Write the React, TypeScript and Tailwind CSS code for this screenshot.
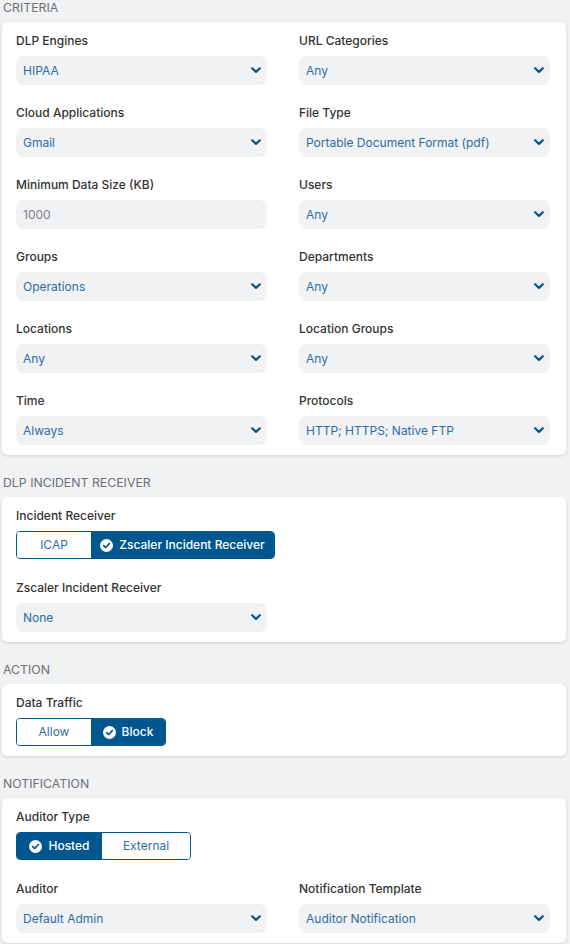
import { useState } from 'react'

type Field = { label: string; value: string; kind?: 'select' | 'input' }

const criteria: Field[] = [
  { label: 'DLP Engines', value: 'HIPAA' },
  { label: 'URL Categories', value: 'Any' },
  { label: 'Cloud Applications', value: 'Gmail' },
  { label: 'File Type', value: 'Portable Document Format (pdf)' },
  { label: 'Minimum Data Size (KB)', value: '1000', kind: 'input' },
  { label: 'Users', value: 'Any' },
  { label: 'Groups', value: 'Operations' },
  { label: 'Departments', value: 'Any' },
  { label: 'Locations', value: 'Any' },
  { label: 'Location Groups', value: 'Any' },
  { label: 'Time', value: 'Always' },
  { label: 'Protocols', value: 'HTTP; HTTPS; Native FTP' },
]

function Chevron() {
  return (
    <svg width="10" height="7" viewBox="0 0 10 7" className="shrink-0">
      <path
        d="M1.2 1.2 5 5 8.8 1.2"
        fill="none"
        stroke="#00578f"
        strokeWidth="2.2"
        strokeLinecap="round"
        strokeLinejoin="round"
      />
    </svg>
  )
}

function CheckCircle() {
  return (
    <svg width="13" height="13" viewBox="0 0 14 14" className="shrink-0">
      <circle cx="7" cy="7" r="7" fill="#ffffff" />
      <path
        d="M4 7.2 6.1 9.2 10 5"
        fill="none"
        stroke="#00578f"
        strokeWidth="1.8"
        strokeLinecap="round"
        strokeLinejoin="round"
      />
    </svg>
  )
}

function Label({ children }: { children: string }) {
  return (
    <div className="h-4 text-[12px] font-medium leading-4 text-[#333333]">
      {children}
    </div>
  )
}

function SelectField({ label, value, kind = 'select' }: Field) {
  return (
    <div className="flex flex-col gap-[7px]">
      <Label>{label}</Label>
      <div className="flex h-[29px] items-center justify-between rounded-lg bg-[#f1f2f4] pl-[7px] pr-[6px]">
        <span
          className={
            kind === 'input'
              ? 'text-[12px] text-[#7b7f86]'
              : 'text-[12px] text-[#2d6da6]'
          }
        >
          {value}
        </span>
        {kind === 'select' ? <Chevron /> : null}
      </div>
    </div>
  )
}

function Toggle({
  options,
  widths,
  initial,
}: {
  options: string[]
  widths: string[]
  initial: number
}) {
  const [active, setActive] = useState(initial)
  return (
    <div className="flex h-[28px] w-fit overflow-hidden rounded-[4px] border border-[#00578f]">
      {options.map((opt, i) => (
        <button
          key={opt}
          type="button"
          onClick={() => setActive(i)}
          className={
            (active === i
              ? 'bg-[#00578f] font-medium text-white '
              : 'bg-white text-[#2d6da6] ') +
            'flex items-center justify-center gap-[6px] text-[12px] ' +
            widths[i]
          }
        >
          {active === i ? <CheckCircle /> : null}
          {opt}
        </button>
      ))}
    </div>
  )
}

function Section({
  title,
  children,
}: {
  title: string
  children: React.ReactNode
}) {
  return (
    <section className="flex flex-col">
      <h2 className="h-4 pl-[1px] text-[12.3px] uppercase leading-4 text-[#6e7075]">
        {title}
      </h2>
      <div className="mt-[6px] rounded-[5px] bg-white pb-[10px] pl-[14px] pr-[16px] pt-[11px] shadow-[0_1px_3px_rgba(0,0,0,0.14)]">
        {children}
      </div>
    </section>
  )
}

export default function App() {
  return (
    <div
      className="flex min-h-[944px] flex-col gap-[20px] bg-[#f1f2f4] pl-[2px] pr-[4px]"
      style={{ fontFamily: 'Inter, "Noto Sans", sans-serif' }}
    >
      <Section title="Criteria">
        <div className="grid grid-cols-2 gap-x-[32px] gap-y-[20px]">
          {criteria.map((f) => (
            <SelectField key={f.label} {...f} />
          ))}
        </div>
      </Section>

      <Section title="DLP Incident Receiver">
        <div className="flex flex-col gap-[21px]">
          <div className="flex flex-col gap-[7px]">
            <Label>Incident Receiver</Label>
            <Toggle
              options={['ICAP', 'Zscaler Incident Receiver']}
              widths={['w-[74px]', 'w-[183px]']}
              initial={1}
            />
          </div>
          <div className="grid grid-cols-2 gap-x-[32px]">
            <SelectField label="Zscaler Incident Receiver" value="None" />
          </div>
        </div>
      </Section>

      <Section title="Action">
        <div className="flex flex-col gap-[7px]">
          <Label>Data Traffic</Label>
          <Toggle
            options={['Allow', 'Block']}
            widths={['w-[74px]', 'w-[74px]']}
            initial={1}
          />
        </div>
      </Section>

      <Section title="Notification">
        <div className="flex flex-col gap-[21px]">
          <div className="flex flex-col gap-[7px]">
            <Label>Auditor Type</Label>
            <Toggle
              options={['Hosted', 'External']}
              widths={['w-[85px]', 'w-[88px]']}
              initial={0}
            />
          </div>
          <div className="grid grid-cols-2 gap-x-[32px]">
            <SelectField label="Auditor" value="Default Admin" />
            <SelectField
              label="Notification Template"
              value="Auditor Notification"
            />
          </div>
        </div>
      </Section>
    </div>
  )
}
